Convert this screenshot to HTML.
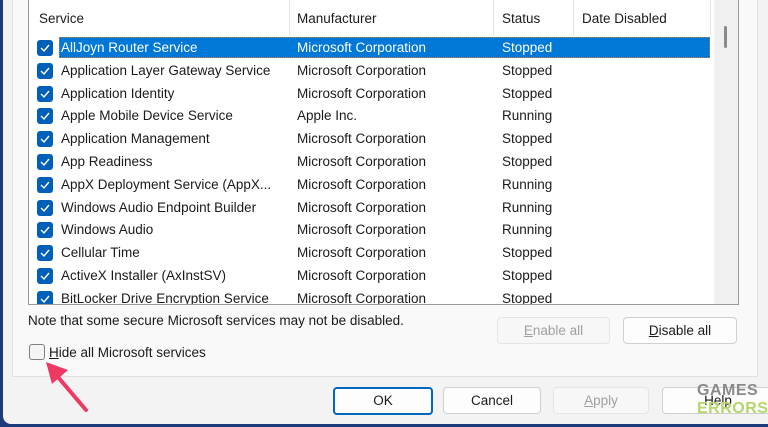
<!DOCTYPE html>
<html><head><style>
body{margin:0;width:768px;height:427px;overflow:hidden;background:#1d3b7a;font-family:"Liberation Sans",sans-serif;font-size:13.5px;color:#1a1a1a;position:relative}
.dlg{position:absolute;left:3px;top:-10px;width:775px;height:434px;background:#f3f3f3;border-radius:8px}
.panel{position:absolute;left:12px;top:-2px;width:744px;height:377px;background:#f9f9f9;border:1px solid #e0e0e0}
.list{position:absolute;left:28px;top:0;width:709px;height:304px;background:#fff;border:1px solid #9a9a9a;border-top:none;overflow:hidden}
.sb{position:absolute;right:0;top:0;width:24px;height:304px;background:#f0f0f0}
.thumb{position:absolute;left:10px;top:26px;width:3px;height:22px;background:#8a8a8a;border-radius:2px}
.hd{position:absolute;top:11px;white-space:nowrap}
.dv{position:absolute;top:0;width:1px;height:35px;background:#e5e5e5}
.row{position:absolute;left:0;height:22px;width:685px}
.row span{position:absolute;top:3px;white-space:nowrap}
.cb{position:absolute;left:8px;top:3px;width:16px;height:16px;background:#005fb8;border-radius:3px}
.cb svg{position:absolute;left:3px;top:3px}
.sel{position:absolute;left:30px;top:0;width:651px;height:21px;background:#0078d7;border:1px dotted #c08040;box-sizing:border-box}
.btn{position:absolute;height:25px;border:1px solid #d0d0d0;border-radius:4px;background:#fdfdfd;text-align:center;line-height:25px;box-sizing:content-box}
</style></head><body>
<div class="dlg"></div>
<div class="panel"></div>
<div class="list">
 <div class="hd" style="left:10px">Service</div>
 <div class="dv" style="left:260px"></div>
 <div class="hd" style="left:268px">Manufacturer</div>
 <div class="dv" style="left:464px"></div>
 <div class="hd" style="left:473px">Status</div>
 <div class="dv" style="left:544px"></div>
 <div class="hd" style="left:553px">Date Disabled</div>
 <div class="dv" style="left:681px"></div>
 <div class="sb"><div class="thumb"></div></div>
 <div id="rows"></div>
</div>
<div style="position:absolute;left:28px;top:313px;white-space:nowrap">Note that some secure Microsoft services may not be disabled.</div>
<div class="btn" style="left:497px;top:317px;width:111px;color:#a0a0a0;background:#f7f7f7;border-color:#e5e5e5"><u>E</u>nable all</div>
<div class="btn" style="left:623px;top:317px;width:112px"><u>D</u>isable all</div>
<div style="position:absolute;left:29px;top:344px;width:14px;height:14px;border:1px solid #808080;border-radius:3px;background:#f5f5f5"></div>
<div style="position:absolute;left:49px;top:345px;white-space:nowrap"><u>H</u>ide all Microsoft services</div>
<svg style="position:absolute;left:38px;top:356px" width="60" height="60"><line x1="48" y1="54" x2="14" y2="14" stroke="#ee3a63" stroke-width="4" stroke-linecap="round"/><polygon points="8,6 30,14 14,28" fill="#ee3a63"/></svg>
<div class="btn" style="left:333px;top:387px;width:96px;border:2px solid #0067c0;height:24px;line-height:24px">OK</div>
<div class="btn" style="left:443px;top:387px;width:96px">Cancel</div>
<div class="btn" style="left:553px;top:387px;width:94px;color:#a0a0a0;background:#f7f7f7;border-color:#e5e5e5"><u>A</u>pply</div>
<div class="btn" style="left:662px;top:387px;width:110px">Help</div>
<div style="position:absolute;left:697px;top:382px;font-weight:bold;font-size:16px;line-height:18px;letter-spacing:0.5px;color:#8a8a8a">GAMES<br><span style="color:#b5d66a">ERRORS</span></div>
<script>
var d=[["AllJoyn Router Service","Microsoft Corporation","Stopped"],["Application Layer Gateway Service","Microsoft Corporation","Stopped"],["Application Identity","Microsoft Corporation","Stopped"],["Apple Mobile Device Service","Apple Inc.","Running"],["Application Management","Microsoft Corporation","Stopped"],["App Readiness","Microsoft Corporation","Stopped"],["AppX Deployment Service (AppX...","Microsoft Corporation","Running"],["Windows Audio Endpoint Builder","Microsoft Corporation","Running"],["Windows Audio","Microsoft Corporation","Running"],["Cellular Time","Microsoft Corporation","Stopped"],["ActiveX Installer (AxInstSV)","Microsoft Corporation","Stopped"],["BitLocker Drive Encryption Service","Microsoft Corporation","Stopped"]];
var h="";d.forEach(function(r,i){var t=37+i*22.8;var c=i==0?"color:#fff;":"";
h+='<div class="row" style="top:'+t+'px">'+(i==0?'<div class="sel"></div>':'')+'<div class="cb"><svg width="10" height="10"><path d="M1 5 L4 8 L9 2" stroke="#fff" stroke-width="1.4" fill="none"/></svg></div><span style="left:32px;'+c+'">'+r[0]+'</span><span style="left:268px;'+c+'">'+r[1]+'</span><span style="left:473px;'+c+'">'+r[2]+'</span></div>';});
document.getElementById("rows").innerHTML=h;
</script>
</body></html>
